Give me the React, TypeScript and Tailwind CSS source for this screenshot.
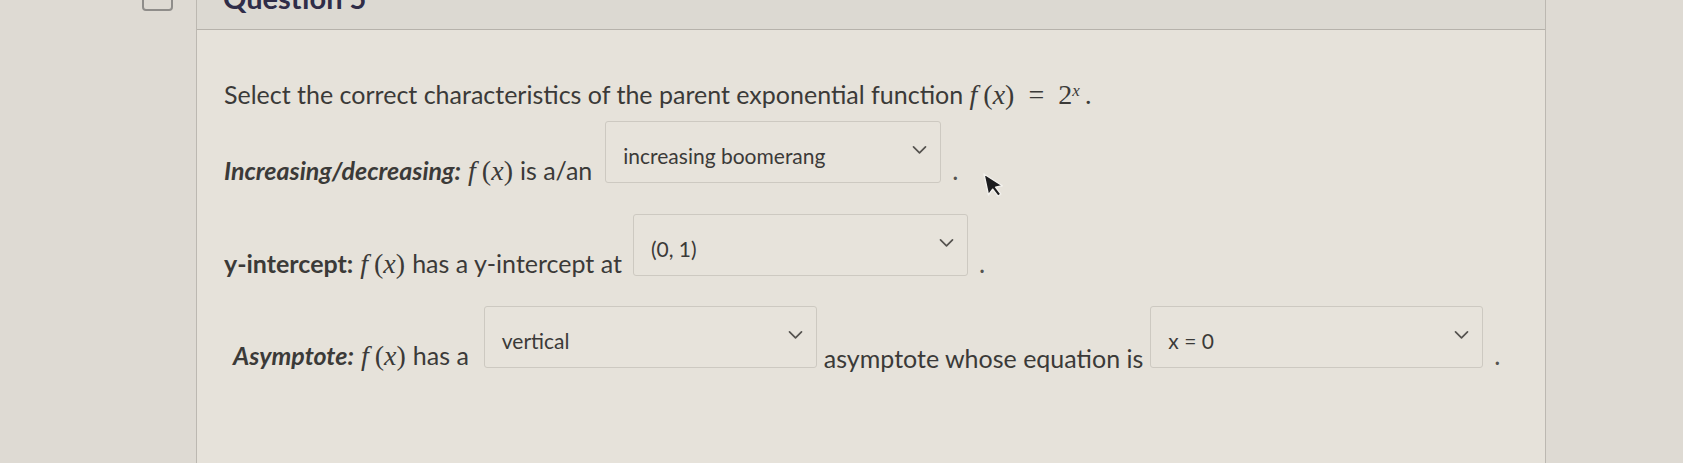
import React from 'react'

const sans = { fontFamily: 'Lato, "Noto Sans", sans-serif' }
const serif = { fontFamily: '"Liberation Serif", "DejaVu Serif", serif' }

function Fx() {
  return (
    <span className="text-[28px] text-[#3b3a38]" style={serif}>
      <i>f</i>
      <span className="ml-[6px]">(</span>
      <i>x</i>
      <span>)</span>
    </span>
  )
}

function Chevron() {
  return (
    <svg width="15" height="10" viewBox="0 0 15 10" fill="none" className="shrink-0">
      <path d="M1.5 1.8 L7.5 7.8 L13.5 1.8" stroke="#55534f" strokeWidth="1.7" strokeLinecap="round" strokeLinejoin="round" />
    </svg>
  )
}

function Dropdown({ value, width }: { value: string; width: string }) {
  return (
    <div
      className={`${width} h-[62px] shrink-0 flex items-center justify-between pl-[17px] pr-[13px] border border-[#cdc9c1] rounded-[3px] bg-[#e7e3db]`}
    >
      <span className="text-[21px] text-[#3b3a38] pt-[8px]" style={sans}>{value}</span>
      <span className="-mt-[4px]"><Chevron /></span>
    </div>
  )
}

function Dot() {
  return <span className="ml-[4px] -mb-[7px] text-[26px] text-[#55534f]">.</span>
}

function Cursor() {
  return (
    <svg width="22" height="30" viewBox="0 0 20 28" className="absolute left-[983px] top-[170px]">
      <g transform="rotate(-12 10 14)">
        <path d="M3 2 L3 22 L8 17.5 L11.5 25 L14.5 23.6 L11 16.3 L17.5 16.3 Z" fill="#1c1c1e" stroke="#f4f2ee" strokeWidth="1.3" strokeLinejoin="round" />
      </g>
    </svg>
  )
}

export default function App() {
  return (
    <div className="relative w-[1683px] h-[463px] overflow-hidden bg-[#dcd9d2] flex" style={sans}>
      {/* left gutter */}
      <div className="w-[196px] shrink-0 bg-[#dedad3]">
        <div className="ml-[142px] -mt-[20px] w-[31px] h-[31px] border-[2.5px] border-[#8f8d8a] rounded-[4px]" />
      </div>

      {/* question panel */}
      <div className="w-[1350px] shrink-0 flex flex-col border-l border-r border-[#bcb8b1] bg-[#e6e2da]">
        <div className="h-[30px] shrink-0 overflow-hidden bg-[#dcd9d2] border-b-[1.5px] border-[#b6b2ab]">
          <div className="pl-[26px] -mt-[17px] text-[29px] font-bold leading-[30px] text-[#2f2d48]">Question 5</div>
        </div>

        <div className="pl-[27px] pt-[44px] text-[25px] text-[#3b3a38]">
          <div className="flex items-baseline h-[32px]">
            <span>Select the correct characteristics of the parent exponential function&nbsp;</span>
            <span className="text-[28px]" style={serif}>
              <i>f</i>
              <span className="ml-[6px]">(</span>
              <i>x</i>
              <span>)</span>
              <span className="mx-[14px]">=</span>
              <span>2</span>
              <sup className="text-[17px] italic">x</sup>
              <span className="ml-[5px]">.</span>
            </span>
          </div>

          <div className="mt-[15px] flex items-end gap-[7px]">
            <div className="flex items-baseline gap-[7px] -mb-[9px]">
              <span className="font-bold italic">Increasing/decreasing:</span>
              <Fx />
              <span className="mr-[6px]">is a/an</span>
            </div>
            <Dropdown value="increasing boomerang" width="w-[336px]" />
            <Dot />
          </div>

          <div className="mt-[31px] flex items-end gap-[7px]">
            <div className="flex items-baseline gap-[7px] -mb-[9px]">
              <span className="font-bold">y-intercept:</span>
              <Fx />
              <span className="mr-[4px]">has a y-intercept at</span>
            </div>
            <Dropdown value="(0, 1)" width="w-[335px]" />
            <Dot />
          </div>

          <div className="mt-[30px] flex items-end gap-[7px] pl-[9px]">
            <div className="flex items-baseline gap-[7px] -mb-[9px]">
              <span className="font-bold italic">Asymptote:</span>
              <Fx />
              <span className="mr-[8px]">has a</span>
            </div>
            <Dropdown value="vertical" width="w-[333px]" />
            <span className="-mb-[9px]">asymptote whose equation is</span>
            <Dropdown value="x = 0" width="w-[333px]" />
            <Dot />
          </div>
        </div>
      </div>

      {/* right gutter */}
      <div className="flex-1 bg-[#dedad3]" />

      <Cursor />
    </div>
  )
}
